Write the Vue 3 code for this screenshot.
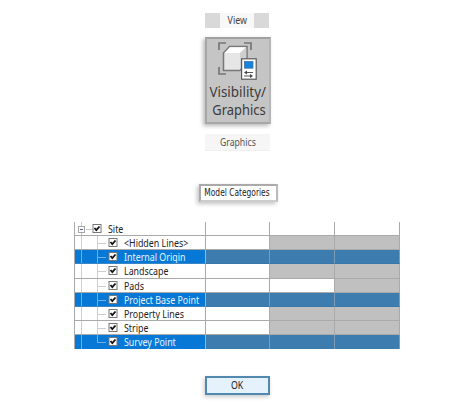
<script setup>
const rows = [
  { name: 'Site', root: true, cells: ['', '', ''] },
  { name: '<Hidden Lines>', cells: ['', 'g', 'g'] },
  { name: 'Internal Origin', selected: true, cells: ['', '', ''] },
  { name: 'Landscape', cells: ['', 'g', 'g'], tall: true },
  { name: 'Pads', cells: ['', '', 'g'] },
  { name: 'Project Base Point', selected: true, cells: ['', '', ''] },
  { name: 'Property Lines', cells: ['', 'g', 'g'] },
  { name: 'Stripe', cells: ['', 'g', 'g'] },
  { name: 'Survey Point', selected: true, last: true, cells: ['', '', ''] },
]
</script>

<template>
  <main class="page">
    <div class="tab"><div class="tab-active"><span class="narrow">View</span></div></div>
    <button class="tool">
      <svg class="tool-icon" width="42" height="38" viewBox="0 0 42 38" fill="none">
        <path d="M1 8V1h7M26 1h7v7M1 25v7h7" stroke="#777" stroke-width="1.7" />
        <path d="M5.5 11 11.5 4.5H29v15l-7 9H5.5z" fill="#e6e6e6" stroke="#777" stroke-width="1.5" />
        <path d="M6.5 11 12 5.3h16L22 11z" fill="#fff" />
        <path d="M22 11l6.2-5.7v14L22 27z" fill="#cfcfcf" />
        <rect x="23.6" y="16.8" width="14.6" height="20.4" fill="#fff" stroke="#5a5a5a" stroke-width="1.2" />
        <rect x="26.4" y="19.4" width="8.6" height="6.8" fill="#1683df" stroke="#3d6f99" stroke-width=".7" />
        <path d="M27 30.5h8M26 34h8" stroke="#555" stroke-width="1.1" />
        <path d="M29 28.5v4l-3-2zM32 32v4l3-2z" fill="#444" />
      </svg>
      <span class="tool-label narrow">Visibility/</span>
      <span class="tool-label second narrow">Graphics</span>
    </button>
    <div class="panel-label"><span class="narrow">Graphics</span></div>
    <div class="categories"><span class="narrow">Model Categories</span></div>
    <section class="table">
      <div v-for="row in rows" :key="row.name" class="row" :class="{ selected: row.selected, root: row.root, tall: row.tall, last: row.last }">
        <div class="name">
          <svg class="tree" width="47" height="15" viewBox="0 0 47 15" fill="none">
            <template v-if="row.root">
              <path d="M6.5 0v4M6.5 11v4M11 7.5h6" stroke="#c8c8c8" />
              <rect x="3.5" y="4.5" width="6" height="6" fill="#fafafa" stroke="#a5a5a5" />
              <path d="M5 7.5h3" stroke="#4f648e" />
            </template>
            <template v-else>
              <path class="guide" d="M6.5 0v15" />
              <path class="guide" :d="row.last ? 'M22.5 0v8' : 'M22.5 0v15'" />
              <path class="guide" d="M23 7.5h8" />
            </template>
            <g :transform="row.root ? 'translate(17.5 2)' : 'translate(33.5 2)'">
              <rect x=".5" y=".5" width="8" height="8" fill="#fff" stroke="#777" />
              <path d="m2 4 1.8 2.2L7 2.5" stroke="#111" stroke-width="1.8" />
            </g>
          </svg>
          <span class="text narrow">{{ row.name }}</span>
        </div>
        <div v-for="(cell, i) in row.cells" :key="i" class="cell" :class="{ grey: cell === 'g' }"></div>
      </div>
    </section>
    <button class="ok"><span class="narrow">OK</span></button>
  </main>
</template>

<style>
body { margin: 0; background: #fff; }
</style>

<style scoped>
.page {
  width: 474px; height: 409px; box-sizing: border-box; padding-top: 13px;
  display: flex; flex-direction: column; align-items: flex-start;
  background: #fff; overflow: hidden; color: #333;
  font-family: "Noto Sans", "Open Sans", sans-serif;
}
button { padding: 0; font: inherit; color: inherit; }
.narrow { display: inline-block; white-space: nowrap; transform: scaleX(.86); }
.tab {
  width: 64px; height: 15px; margin-left: 205px; display: flex; justify-content: center;
  background: #d9d9d9;
}
.tab-active { width: 34px; background: #f8f8f8; text-align: center; font-size: 10.3px; line-height: 15px; color: #444; }
.tool {
  width: 66px; height: 87px; margin: 9px 0 0 205px; box-sizing: border-box;
  display: flex; flex-direction: column; align-items: center; justify-content: flex-start;
  background: #c5c5c5; border: 2px solid #a7a7a7; border-top-color: #a0a0a0; border-right-color: #b5b5b5;
  box-shadow: -2px 2px 4px #bbb;
}
.tool-icon { flex: none; margin: 3px 0 0 1px; }
.tool-label { font-size: 15px; line-height: 18px; height: 18px; color: #3b3b3b; }
.tool-label:not(.second) { margin: 2px 1px 0 0; transform: scaleX(.89); }
.tool-label.second { margin-left: 1px; }
.panel-label {
  width: 65px; height: 17px; margin: 10px 0 0 205px; text-align: center;
  background: #f6f6f6; border-bottom: 1px solid #f0f0f0; font-size: 10.1px; line-height: 16px; color: #555;
  box-sizing: border-box;
}
.panel-label .narrow { margin-left: 1px; }
.categories {
  width: 79px; height: 18px; margin: 33px 0 0 199px; box-sizing: border-box;
  display: flex; justify-content: center;
  border: 2px solid #aaa; border-bottom-color: #ccc; border-right-color: #bbb; box-shadow: -2px 2px 4px #c4c4c4;
  background: #fff; white-space: nowrap;
  font: 9.7px/14px "DejaVu Sans Condensed", "DejaVu Sans", sans-serif; color: #222;
}
.categories .narrow { margin-right: 3px; }
.table { width: 325px; margin: 20px 0 0 74px; border-left: 1px solid #aaa; }
.row { display: grid; grid-template-columns: 131px 64px 65px 65px; height: 14px; }
.row.tall { height: 15px; }
.name, .cell { box-sizing: border-box; border-right: 1px solid #aaa; border-bottom: 1px solid #aaa; }
.row.last > div { border-bottom: 0; }
.name { display: flex; overflow: hidden; }
.tree { flex: none; }
.guide { stroke: #cecece; }
.text { margin-left: 2px; font-size: 10.3px; line-height: 15px; color: #222; transform-origin: left; }
.root .text { margin-left: -14px; }
.grey { background: #c0c0c0; }
.selected .name { background: #0878d7; border-color: #3a86c4; border-right-color: #9bb5cc; }
.selected .cell { background: #3d7cae; border-bottom-color: #3977a8; border-right-color: #7c9bb5; }
.selected .text { color: #e5f4ff; }
.selected .guide { stroke: #6fb0e8; }
.ok {
  width: 65px; height: 19px; margin: 27px 0 0 205px; box-sizing: border-box;
  border: 2px solid #5289ae; background: #e5f1fb; box-shadow: -1px 2px 4px #ccc;
  font-size: 10.2px; line-height: 15px; text-align: center; color: #222;
}
</style>
